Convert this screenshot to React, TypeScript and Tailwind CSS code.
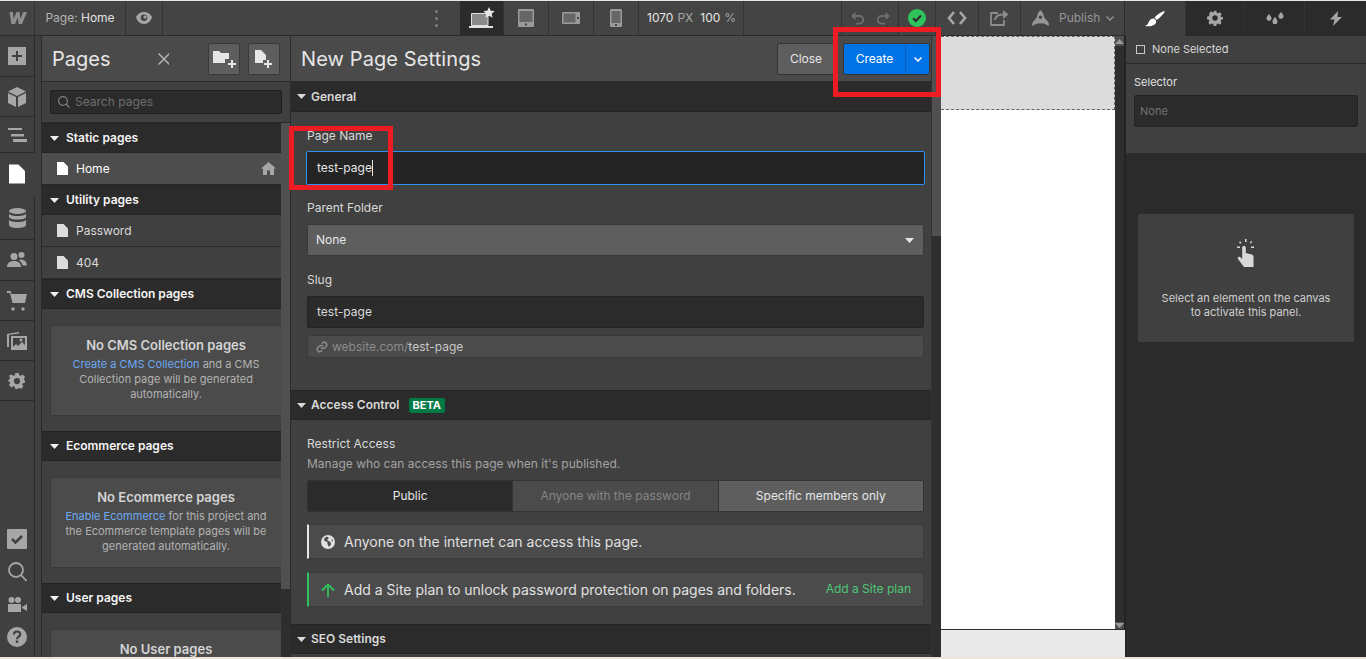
import React from "react";

const Caret = ({ className = "" }: { className?: string }) => (
  <svg width="9" height="5" viewBox="0 0 9 5" className={className}><path d="M0 0h9L4.5 5z" fill="currentColor" /></svg>
);

const Doc = ({ color = "#e0e0e0", w = 11, h = 13 }: { color?: string; w?: number; h?: number }) => (
  <svg width={w} height={h} viewBox="0 0 11 13"><path d="M0 0h6.5L11 4.500V13H0z" fill={color} /></svg>
);

const SectionHead = ({ children }: { children: React.ReactNode }) => (
  <div className="flex h-[30px] items-center gap-[7px] border-y border-[#242424] bg-[#2b2b2b] pl-[8px] text-[12px] font-semibold text-[#f5f5f5]">
    <Caret className="text-[#f0f0f0]" />
    <span>{children}</span>
  </div>
);

const PageRow = ({ name, active = false, home = false }: { name: string; active?: boolean; home?: boolean }) => (
  <div className={`flex h-[32px] items-center border-b border-[#2b2b2b] pl-[15px] pr-[5px] text-[12px] ${active ? "bg-[#4d4d4d] text-white" : "bg-[#404040] text-[#d9d9d9]"}`}>
    <Doc color={active ? "#ffffff" : "#dcdcdc"} />
    <span className="ml-[8px]">{name}</span>
    {home && (
      <svg className="ml-auto" width="15" height="13" viewBox="0 0 15 13"><path d="M7.500 0 15 6.500h-2V13H9V8.500H6V13H2V6.500H0z" fill="#a6a6a6" /></svg>
    )}
  </div>
);

const EmptyCard = ({ title, children, h = "h-[91px]" }: { title: string; children?: React.ReactNode; h?: string }) => (
  <div className="px-[8px] pt-[16px] pb-[15px] pr-0">
    <div className={`${h} rounded-l-[2px] border border-r-0 border-[#3a3a3a] bg-[#4b4b4b] px-[12px] pt-[10px] text-center`}>
      <div className="text-[13px] leading-[18px] font-semibold text-[#d4d4d4]">{title}</div>
      <div className="mt-[3px] text-[11px] leading-[15px] text-[#b3b3b3]">{children}</div>
    </div>
  </div>
);

const Label = ({ children }: { children: React.ReactNode }) => (
  <div className="text-[12px] leading-[16px] text-[#d9d9d9]">{children}</div>
);

const RailItem = ({ children, active = false, h = "h-[40px]", border = true }: { children: React.ReactNode; active?: boolean; h?: string; border?: boolean }) => (
  <div className={`flex ${h} items-center justify-center ${active ? "w-[41px] bg-[#404040] pr-[7px] pb-[2px]" : `w-[35px] border-r border-[#2b2b2b] ${border ? "border-b" : ""}`}`}>
    {children}
  </div>
);

const TopCell = ({ w, children, active = false }: { w: string; children?: React.ReactNode; active?: boolean }) => (
  <div className={`flex h-full ${w} shrink-0 items-center justify-center border-r border-[#333333] ${active ? "bg-[#2b2b2b]" : ""}`}>{children}</div>
);

export default function App() {
  return (
    <div className="relative flex h-[659px] w-[1366px] flex-col overflow-hidden bg-[#2b2b2b] font-['Inter','Liberation_Sans',sans-serif] text-[12px] text-[#d9d9d9]">
      <div className="h-px shrink-0 bg-[#e6e6e6]" />
      {/* Top bar */}
      <div className="flex h-[35px] shrink-0 items-center border-b border-[#2b2b2b] bg-[#444444]">
        <TopCell w="w-[35px]">
          <svg width="20" height="14" viewBox="0 0 20 13"><path d="M2.500 0.500h3.400l.7 7 3-7h3l.7 7 2.900-7H20l-5 12h-3.400l-.8-6.500-2.800 6.500H4.400z" fill="#8f8f8f" /></svg>
        </TopCell>
        <TopCell w="w-[91px]">
          <span className="text-[12px] text-[#b3b3b3]">Page:&nbsp;</span><span className="text-[12px] text-[#e0e0e0]">Home</span>
        </TopCell>
        <TopCell w="w-[37px]">
          <svg width="16" height="12" viewBox="0 0 16 12"><path fillRule="evenodd" d="M0 5C1.800 1.800 4.600 0 8 0s6.200 1.800 8 5c-1 4-4 7-8 7S1 9 0 5zm8-2.500A3.200 3.200 0 1 0 8 9a3.200 3.200 0 0 0 0-6.500z" fill="#a6a6a6" /><circle cx="9" cy="5" r="1.500" fill="#a6a6a6" /></svg>
        </TopCell>
        <div className="flex h-full w-[297px] shrink-0 items-center justify-end pr-[22px]">
          <div className="flex flex-col gap-[4px]">
            <span className="h-[3px] w-[3px] rounded-full bg-[#808080]" />
            <span className="h-[3px] w-[3px] rounded-full bg-[#808080]" />
            <span className="h-[3px] w-[3px] rounded-full bg-[#808080]" />
          </div>
        </div>
        <TopCell w="w-[44px]" active>
          <svg width="26" height="22" viewBox="0 0 26 22">
            <path d="M2.500 6.500h16.500v12H2.500z" fill="#8a8a8a" stroke="#e0e0e0" strokeWidth="1" />
            <path d="M0 19h24v2H0z" fill="#e0e0e0" />
            <path d="m20 0 1.700 3.700 4 .4-3 2.700.9 4-3.600-2.100-3.600 2.100.9-4-3-2.700 4-.4z" fill="#e8e8e8" />
          </svg>
        </TopCell>
        <TopCell w="w-[45px]">
          <svg width="16" height="18" viewBox="0 0 16 18"><rect width="16" height="18" rx="1" fill="#9a9a9a" /><rect x="1.500" y="2" width="13" height="11" fill="#666666" /><rect x="7" y="14.500" width="2" height="2" fill="#444444" /></svg>
        </TopCell>
        <TopCell w="w-[45px]">
          <svg width="18" height="12" viewBox="0 0 18 12"><rect width="18" height="12" rx="1" fill="#9a9a9a" /><rect x="1.500" y="1.500" width="12" height="9" fill="#666666" /><rect x="15" y="5" width="2" height="2" fill="#444444" /></svg>
        </TopCell>
        <TopCell w="w-[45px]">
          <svg width="12" height="18" viewBox="0 0 12 18"><rect width="12" height="18" rx="1.500" fill="#9a9a9a" /><rect x="1.500" y="2" width="9" height="12" fill="#666666" /><rect x="5" y="15" width="2" height="2" fill="#444444" /></svg>
        </TopCell>
        <div className="flex h-full w-[105px] shrink-0 items-center border-r border-[#333333] pl-[8px] text-[12px]">
          <span className="text-[#e6e6e6]">1070</span><span className="ml-[4px] text-[#a6a6a6]">PX</span>
          <span className="ml-[7px] text-[#e6e6e6]">100</span><span className="ml-[4px] text-[#a6a6a6]">%</span>
        </div>
        <TopCell w="w-[98px]" />
        <div className="flex h-full w-[57px] shrink-0 items-center justify-center gap-[11px] border-r border-[#333333]">
          <svg width="14" height="13" viewBox="0 0 14 13" fill="none" stroke="#6e6e6e" strokeWidth="1.800"><path d="M4.500 1 1.500 4l3 3" /><path d="M2 4h6.500a3.800 3.800 0 0 1 0 7.600H5" /></svg>
          <svg width="14" height="13" viewBox="0 0 14 13" fill="none" stroke="#6e6e6e" strokeWidth="1.800"><path d="m9.500 1 3 3-3 3" /><path d="M12 4H5.500a3.800 3.800 0 0 0 0 7.600H9" /></svg>
        </div>
        <TopCell w="w-[37px]">
          <svg width="18" height="18" viewBox="0 0 18 18"><circle cx="9" cy="9" r="9" fill="#2fc35c" /><path d="m5 9.300 2.800 2.700L13 6.500" fill="none" stroke="#2b2b2b" strokeWidth="2" /></svg>
        </TopCell>
        <TopCell w="w-[43px]">
          <svg width="20" height="14" viewBox="0 0 20 14" fill="none" stroke="#a6a6a6" strokeWidth="2.600"><path d="M7 1 2 7l5 6" /><path d="m13 1 5 6-5 6" /></svg>
        </TopCell>
        <TopCell w="w-[42px]">
          <svg width="19" height="16" viewBox="0 0 19 16" fill="none" stroke="#8c8c8c" strokeWidth="1.800"><path d="M8 3H1v12h13v-5" /><path d="M5 10c.5-4 3-5.500 8-5.500" /><path d="M18.500 4.500 13 0v9z" fill="#8c8c8c" stroke="none" /></svg>
        </TopCell>
        <div className="flex h-full w-[104px] shrink-0 items-center border-r border-[#2b2b2b] pl-[11px] text-[12px] text-[#969696]">
          <svg width="17" height="16" viewBox="0 0 17 16"><path fillRule="evenodd" d="M8.500 0c2 1.800 3.200 4.200 3.500 7l4.500 5.500L17 16l-5-2.500H5L0 16l.5-3.500L5 7c.3-2.800 1.500-5.200 3.500-7zm0 5.500a1.700 1.700 0 1 0 0 3.400 1.700 1.700 0 0 0 0-3.400z" fill="#969696" /></svg>
          <span className="ml-[10px]">Publish</span>
          <svg className="ml-[6px]" width="8" height="5" viewBox="0 0 8 5" fill="none" stroke="#969696" strokeWidth="1.300"><path d="m.5.500 3.500 3.500L7.500.500" /></svg>
        </div>
        <div className="flex h-[36px] w-[60px] shrink-0 items-center justify-center self-start bg-[#404040]">
          <svg width="20" height="16" viewBox="0 0 20 16"><path d="M19 0c.7.500.7 1.200.2 1.800-2 2.500-4.500 5-7.300 7.200L9.500 6.500C12 3.800 15.500 1.500 19 0z" fill="#ffffff" /><path d="M8.500 7.500c1.500.3 2.500 1.400 2.700 3C11.300 14 6 16 0 15c2-.8 3-1.800 3.500-3.500.6-2.200 2.500-4 5-4z" fill="#ffffff" /></svg>
        </div>
        <div className="flex h-full w-[60px] shrink-0 items-center justify-center border-x border-[#333333] bg-[#2b2b2b]">
          <svg width="16" height="16" viewBox="0 0 16 16"><path fillRule="evenodd" d="M6.500 0h3l.4 2.200 1.500.6L13.300 1.600l2.100 2.100-1.200 1.900.6 1.500L17 6.500v3l-2.200.4-.6 1.500 1.200 1.900-2.100 2.100-1.900-1.200-1.500.6L9.500 17h-3l-.4-2.200-1.500-.6-1.900 1.200-2.100-2.100 1.200-1.900-.6-1.500L-1 9.500v-3l2.200-.4.600-1.500L1.600 2.700 3.700.6l1.900 1.200 1.500-.6zM8 5a3 3 0 1 0 0 6 3 3 0 0 0 0-6z" fill="#a6a6a6" transform="translate(.8 .8) scale(.9)" /></svg>
        </div>
        <div className="flex h-full w-[60px] shrink-0 items-center justify-center border-r border-[#333333] bg-[#2b2b2b]">
          <svg width="18" height="13" viewBox="0 0 18 13" fill="#a6a6a6"><path d="M3 2c1.500 2 2.500 3 2.500 4.300a2.500 2.500 0 0 1-5 0C.5 5 1.500 4 3 2z" /><path d="M15 0c1.500 2 2.500 3 2.500 4.300a2.500 2.500 0 0 1-5 0C12.500 3 13.500 2 15 0z" /><path d="M9 5c1.500 2 2.500 3 2.500 4.800a2.500 2.500 0 0 1-5 0C6.500 8 7.500 7 9 5z" /></svg>
        </div>
        <div className="flex h-full flex-1 items-center justify-center bg-[#2b2b2b]">
          <svg width="12" height="15" viewBox="0 0 12 15"><path d="M8 0 0 8.500h4.500L3 15l9-9H7.500z" fill="#a6a6a6" /></svg>
        </div>
      </div>

      {/* Main */}
      <div className="flex min-h-0 flex-1">
        {/* Rail */}
        <div className="flex w-[42px] shrink-0 flex-col border-r border-[#2b2b2b] bg-[#404040]">
          <RailItem h="h-[41px]">
            <svg width="18" height="18" viewBox="0 0 18 18"><path fillRule="evenodd" d="M0 0h18v18H0zm8 4v4H4v2h4v4h2v-4h4V8h-4V4z" fill="#a6a6a6" /></svg>
          </RailItem>
          <RailItem>
            <svg width="18" height="20" viewBox="0 0 18 20" fill="#a6a6a6"><path d="M9 0l9 4.500L9 9 0 4.500z" /><path d="M0 6l8 4v10l-8-4z" /><path d="M18 6l-8 4v10l8-4z" /></svg>
          </RailItem>
          <RailItem h="h-[36px]">
            <svg width="19" height="14" viewBox="0 0 19 14" fill="#a6a6a6"><rect width="14" height="2" /><rect x="3" y="6" width="13" height="2.500" /><rect x="5" y="11" width="14" height="3" /></svg>
          </RailItem>
          <RailItem active h="h-[44px]">
            <Doc color="#ffffff" w={16} h={20} />
          </RailItem>
          <RailItem h="h-[43px]">
            <svg width="17" height="20" viewBox="0 0 17 20" fill="#a6a6a6"><ellipse cx="8.500" cy="3" rx="8.500" ry="3" /><path d="M0 5.500C1 7.500 5 8 8.500 8S16 7.500 17 5.500V9c-1 2-5 2.500-8.500 2.500S1 11 0 9z" /><path d="M0 11.500c1 2 5 2.500 8.500 2.500s7.500-.5 8.500-2.500V17c0 1.700-3.800 3-8.500 3S0 18.700 0 17z" /></svg>
          </RailItem>
          <RailItem h="h-[41px]">
            <svg width="20" height="16" viewBox="0 0 20 16" fill="#a6a6a6"><circle cx="7" cy="4.500" r="3.500" /><path d="M0 15c0-4 3-6 7-6s7 2 7 6z" /><circle cx="14.500" cy="3" r="3" /><path d="M13 7.500c4 0 7 2 7 6h-4.500c-.5-2.500-1.500-4-3.500-5z" /></svg>
          </RailItem>
          <RailItem>
            <svg width="20" height="20" viewBox="0 0 20 20" fill="#a6a6a6"><path d="M0 0h3.500l1 3H20l-2 9H5.500L3 2H0z" /><circle cx="6" cy="18" r="1.700" /><circle cx="16" cy="18" r="1.700" /></svg>
          </RailItem>
          <RailItem>
            <svg width="20" height="18" viewBox="0 0 20 18" fill="#a6a6a6"><path d="M0 2 12 0v1.500L2 3v12H0z" /><path fillRule="evenodd" d="M4 4h16v14H4zm2 2v9l3-3 2 2 4-4 3 3V6z" /><circle cx="14" cy="8" r="1.500" /></svg>
          </RailItem>
          <RailItem>
            <svg width="18" height="18" viewBox="0 0 18 18"><path fillRule="evenodd" d="M7 0h4l.5 2.500 1.700.7 2.100-1.400 2.800 2.800-1.400 2.100.7 1.700L18 9v0l0 2-2.500.5-.7 1.700 1.400 2.100-2.800 2.800-2.100-1.400-1.700.7L11 18H7l-.5-2.500-1.700-.7-2.100 1.400L-.1 13.400l1.400-2.100-.7-1.700L-2 9l2.500-2 .7-1.700L-.1 3.200 2.700 1.800l2.100 1.400 1.700-.7zM9 5.500a3.500 3.500 0 1 0 0 7 3.500 3.500 0 0 0 0-7z" fill="#a6a6a6" transform="translate(1 1) scale(.89)" /></svg>
          </RailItem>
          <div className="flex w-[35px] flex-1 flex-col items-center justify-end gap-[15px] border-r border-[#2b2b2b] pb-[10px]">
            <svg className="-mb-[2px]" width="20" height="20" viewBox="0 0 20 20"><rect width="20" height="20" rx="1" fill="#a6a6a6" /><path d="m5 10 3.500 3.500L15 7" fill="none" stroke="#404040" strokeWidth="2.500" /></svg>
            <svg width="19" height="20" viewBox="0 0 19 20" fill="none" stroke="#a6a6a6" strokeWidth="1.800"><circle cx="8" cy="8" r="7" /><path d="m13 13 5.500 6" /></svg>
            <svg width="20" height="15" viewBox="0 0 20 15" fill="#a6a6a6"><circle cx="4.500" cy="3" r="3" /><circle cx="11" cy="3" r="3" /><rect x="1" y="7" width="13" height="8" /><path d="m15 10 5-3v7l-5-3z" /></svg>
            <svg width="20" height="20" viewBox="0 0 20 20"><circle cx="10" cy="10" r="10" fill="#a6a6a6" /><path d="M6.800 7.500C7 5.500 8.300 4.500 10 4.500c2 0 3.300 1.200 3.300 2.800 0 2.400-3.300 2.500-3.300 5" fill="none" stroke="#404040" strokeWidth="2.200" /><rect x="8.800" y="13.500" width="2.400" height="2.400" fill="#404040" /></svg>
          </div>
        </div>

        {/* Pages panel */}
        <div className="flex w-[249px] shrink-0 flex-col border-r border-[#2b2b2b] bg-[#404040]">
          <div className="flex h-[46px] shrink-0 items-center border-b border-[#2b2b2b] bg-[#4a4a4a] pl-[10px] pr-[10px]">
            <span className="text-[20px] text-[#e6e6e6]">Pages</span>
            <svg className="ml-[47px]" width="12" height="12" viewBox="0 0 12 12" stroke="#b3b3b3" strokeWidth="1.500"><path d="m.5.500 11 11M11.500.500l-11 11" /></svg>
            <div className="ml-[39px] flex h-[32px] w-[32px] items-center justify-center rounded-[2px] border border-[#3a3a3a] bg-[#5e5e5e]">
              <svg width="23" height="18" viewBox="0 0 23 18" fill="#e6e6e6"><path d="M0 1h6l2 2h8v6h-4v4H0z" /><path d="M18 10h2v3h3v2h-3v3h-2v-3h-3v-2h3z" /></svg>
            </div>
            <div className="ml-[8px] flex h-[32px] w-[32px] items-center justify-center rounded-[2px] border border-[#3a3a3a] bg-[#5e5e5e]">
              <svg width="18" height="18" viewBox="0 0 18 18" fill="#e6e6e6"><path d="M0 0h6l5 5v5H8v3H0z" /><path d="M12 10h2v3h3v2h-3v3h-2v-3H9v-2h3z" /></svg>
            </div>
          </div>
          <div className="flex h-[41px] shrink-0 items-center border-b border-[#2b2b2b] px-[8px]">
            <div className="flex h-[24px] w-full items-center gap-[5px] rounded-[2px] border border-[#1f1f1f] bg-[#2b2b2b] pl-[7px] text-[12px] text-[#6e6e6e]">
              <svg width="12" height="12" viewBox="0 0 12 12" fill="none" stroke="#808080" strokeWidth="1.200"><circle cx="5" cy="5" r="4.400" /><path d="m8 8 3.500 3.500" /></svg>
              <span>Search pages</span>
            </div>
          </div>
          <div className="flex min-h-0 flex-1 overflow-hidden">
            <div className="w-[239px] shrink-0">
              <SectionHead>Static pages</SectionHead>
              <PageRow name="Home" active home />
              <SectionHead>Utility pages</SectionHead>
              <PageRow name="Password" />
              <PageRow name="404" />
              <SectionHead>CMS Collection pages</SectionHead>
              <EmptyCard title="No CMS Collection pages">
                <span className="text-[#6da9f2]">Create a CMS Collection</span> and a CMS Collection page will be generated automatically.
              </EmptyCard>
              <SectionHead>Ecommerce pages</SectionHead>
              <EmptyCard title="No Ecommerce pages">
                <span className="text-[#6da9f2]">Enable Ecommerce</span> for this project and the Ecommerce template pages will be generated automatically.
              </EmptyCard>
              <SectionHead>User pages</SectionHead>
              <EmptyCard title="No User pages" />
            </div>
            <div className="flex w-[9px] shrink-0 flex-col bg-[#2e2e2e]">
              <div className="h-[466px] bg-[#505050]" />
            </div>
          </div>
        </div>

        {/* Settings */}
        <div className="flex w-[650px] shrink-0 bg-[#404040]">
          <div className="flex min-w-0 flex-1 flex-col">
            <div className="flex h-[46px] shrink-0 items-center border-b border-[#2b2b2b] bg-[#4a4a4a] pl-[10px]">
              <span className="text-[20px] tracking-[0.1px] text-[#e6e6e6]">New Page Settings</span>
            </div>
            <div className="flex h-[30px] shrink-0 items-center gap-[5px] border-b border-[#242424] bg-[#2b2b2b] pl-[6px] text-[12px] font-semibold text-[#d9d9d9]">
              <Caret className="text-[#d9d9d9]" /><span>General</span>
            </div>
            <div className="flex h-[278px] shrink-0 flex-col pl-[16px] pr-[7px] pt-[16px]">
              <Label>Page Name</Label>
              <div className="-mx-px mt-[7px] flex h-[34px] items-center rounded-[2px] border border-[#2f8fef] bg-[#242424] pl-[10px] text-[12px] text-[#e6e6e6]">
                test-page<span className="h-[16px] w-px bg-[#e6e6e6]" />
              </div>
              <div className="mt-[15px]"><Label>Parent Folder</Label></div>
              <div className="mt-[8px] flex h-[32px] items-center justify-between rounded-[2px] border border-[#3a3a3a] bg-[#5e5e5e] pl-[8px] pr-[9px] text-[12px] text-[#e6e6e6]">
                <span>None</span><Caret className="text-[#e6e6e6]" />
              </div>
              <div className="mt-[16px]"><Label>Slug</Label></div>
              <div className="mt-[8px] flex h-[32px] items-center rounded-[2px] border border-[#242424] bg-[#2b2b2b] pl-[9px] text-[12px] text-[#d9d9d9]">test-page</div>
              <div className="mt-[7px] flex h-[23px] items-center gap-[4px] rounded-[2px] border border-[#3a3a3a] bg-[#4b4b4b] pl-[8px] text-[12px]">
                <svg width="12" height="12" viewBox="0 0 24 24" fill="none" stroke="#8c8c8c" strokeWidth="3"><path d="M10 13a5 5 0 0 0 7.500.5l3-3a5 5 0 0 0-7-7l-1.700 1.700" /><path d="M14 11a5 5 0 0 0-7.500-.5l-3 3a5 5 0 0 0 7 7l1.700-1.700" /></svg>
                <span className="text-[#8c8c8c]">website.com/</span><span className="-ml-[4px] text-[#c7c7c7]">test-page</span>
              </div>
            </div>
            <div className="flex h-[30px] shrink-0 items-center gap-[5px] border-y border-[#242424] bg-[#2b2b2b] pl-[6px] text-[12px] font-semibold text-[#d9d9d9]">
              <Caret className="text-[#d9d9d9]" /><span>Access Control</span>
              <span className="ml-[4px] rounded-[2px] bg-[#007a45] px-[4px] text-[11px] leading-[15px] font-bold text-white">BETA</span>
            </div>
            <div className="flex h-[204px] shrink-0 flex-col pl-[16px] pr-[7px] pt-[16px]">
              <Label>Restrict Access</Label>
              <div className="mt-[4px] text-[12px] leading-[16px] text-[#a3a3a3]">Manage who can access this page when it's published.</div>
              <div className="mt-[8px] flex h-[32px] overflow-hidden rounded-[2px] border border-[#333333] text-[12px]">
                <div className="flex flex-1 items-center justify-center bg-[#2b2b2b] text-[#e6e6e6]">Public</div>
                <div className="flex flex-1 items-center justify-center border-l border-[#333333] bg-[#4b4b4b] text-[#858585]">Anyone with the password</div>
                <div className="flex flex-1 items-center justify-center border-l border-[#333333] bg-[#5e5e5e] text-[#e6e6e6]">Specific members only</div>
              </div>
              <div className="mt-[12px] flex h-[35px] items-center border border-l-[2px] border-[#3a3a3a] border-l-[#e6e6e6] bg-[#4b4b4b] pl-[12px] text-[14px] text-[#e0e0e0]">
                <svg width="14" height="14" viewBox="0 0 14 14"><circle cx="7" cy="7" r="7" fill="#e0e0e0" /><path d="M6 1.500 3 3.500l.5 2.500 3 1v2l1.500 3L10 9.500 9.500 7l-2-1L6 5l2-2zM11 3.500l1 3-1.500-.5z" fill="#4b4b4b" /></svg>
                <span className="ml-[9px]">Anyone on the internet can access this page.</span>
              </div>
              <div className="mt-[13px] flex h-[35px] items-center border border-l-[2px] border-[#3a3a3a] border-l-[#2fc35c] bg-[#4b4b4b] pl-[12px] pr-[12px] text-[14px] text-[#e0e0e0]">
                <svg width="14" height="14" viewBox="0 0 14 14" fill="none" stroke="#2fc35c" strokeWidth="1.800"><path d="M7 14V1.500" /><path d="M1 7.500l6-6 6 6" /></svg>
                <span className="ml-[9px]">Add a Site plan to unlock password protection on pages and folders.</span>
                <span className="ml-auto -mt-[2px] text-[12px] text-[#4fc775]">Add a Site plan</span>
              </div>
            </div>
            <div className="flex h-[30px] shrink-0 items-center gap-[5px] border-y border-[#242424] bg-[#2b2b2b] pl-[6px] text-[12px] font-semibold text-[#d9d9d9]">
              <Caret className="text-[#d9d9d9]" /><span>SEO Settings</span>
            </div>
          </div>
          <div className="flex w-[10px] shrink-0 flex-col border-l border-[#333333] bg-[#2e2e2e]">
            <div className="h-[200px] bg-[#505050]" />
          </div>
        </div>

        {/* Canvas */}
        <div className="flex w-[184px] shrink-0 flex-col bg-[#2b2b2b]">
          <div className="flex min-h-0 flex-1">
            <div className="flex w-[174px] shrink-0 flex-col">
              <div className="h-[74px] shrink-0 border-y border-r border-dashed border-[#666666] bg-[#dcdcdc]" />
              <div className="flex-1 bg-white" />
            </div>
            <div className="flex w-[10px] shrink-0 flex-col justify-between border-r border-[#222222] bg-[#2e2e2e]">
              <div className="flex h-[10px] items-center justify-center bg-[#505050]"><Caret className="rotate-180 text-[#999999]" /></div>
              <div className="flex h-[7px] items-center justify-center bg-[#505050]"><Caret className="text-[#999999]" /></div>
            </div>
          </div>
          <div className="h-[28px] shrink-0 border-t border-[#2b2b2b] bg-[#e9e9e9]" />
        </div>

        {/* Right panel */}
        <div className="flex min-w-0 flex-1 flex-col border-l border-[#242424] bg-[#2b2b2b]">
          <div className="flex h-[28px] shrink-0 items-center gap-[6px] border-b border-[#2b2b2b] bg-[#404040] pl-[10px] text-[12px] text-[#d9d9d9]">
            <span className="h-[9px] w-[9px] border border-[#c7c7c7]" />
            <span className="ml-[1px] text-[11px]">None Selected</span>
          </div>
          <div className="h-[89px] shrink-0 bg-[#404040] px-[8px] pt-[10px]">
            <div className="text-[11px] leading-[16px] text-[#e0e0e0]">Selector</div>
            <div className="mt-[5px] flex h-[32px] items-center rounded-[2px] border border-[#242424] bg-[#2b2b2b] pl-[5px] text-[11px] text-[#737373]">None</div>
          </div>
          <div className="mx-[12px] mt-[61px] flex h-[128px] flex-col items-center rounded-[2px] bg-[#404040] pt-[25px] text-center text-[11px] leading-[14px] text-[#cfcfcf]">
            <svg width="20" height="28" viewBox="0 0 20 28" fill="#d9d9d9">
              <rect x="9" y="0" width="1.500" height="3" /><rect x="3" y="3" width="1.500" height="2" transform="rotate(-35 3 3)" /><rect x="15" y="2" width="1.500" height="2" transform="rotate(35 15 2)" /><rect x="1" y="7.500" width="3" height="1.500" /><rect x="15" y="7.500" width="3" height="1.500" />
              <path d="M8 7c1 0 1.800.7 1.800 1.700V14l6 1.500c1 .3 1.700 1 1.700 2V28H8l-6-8c-.5-.8-.3-1.500.3-2 .7-.5 1.500-.4 2.200.2L6.200 20V8.700C6.200 7.700 7 7 8 7z" />
            </svg>
            <div className="mt-[24px]">Select an element on the canvas<br />to activate this panel.</div>
          </div>
        </div>
      </div>
      <div className="h-[2px] shrink-0 bg-[#efe3d3]" />

      {/* Header actions, laid over the settings header */}
      <div className="absolute top-[43px] left-[777px] flex h-[32px] w-[58px] items-center justify-center rounded-[2px] border border-[#333333] bg-[#5e5e5e] text-[12px] text-[#e6e6e6]">Close</div>
      <div className="absolute top-[43px] left-[843px] flex h-[32px] w-[87px] items-center rounded-[2px] border border-[#333333] bg-[#0073e6] text-[12px] text-white">
        <div className="flex h-full w-[62px] items-center justify-center border-r border-[#0a5fb8]">Create</div>
        <div className="flex flex-1 items-center justify-center">
          <svg width="8" height="5" viewBox="0 0 8 5" fill="none" stroke="#ffffff" strokeWidth="1.500"><path d="m.5.500 3.500 3.500L7.500.500" /></svg>
        </div>
      </div>
      {/* Red annotation rectangles */}
      <div className="absolute top-[126px] left-[289px] h-[64px] w-[104px] border-[5px] border-[#ed1c24]" />
      <div className="absolute top-[27px] left-[833px] h-[70px] w-[108px] border-[5px] border-[#ed1c24]" />
    </div>
  );
}
